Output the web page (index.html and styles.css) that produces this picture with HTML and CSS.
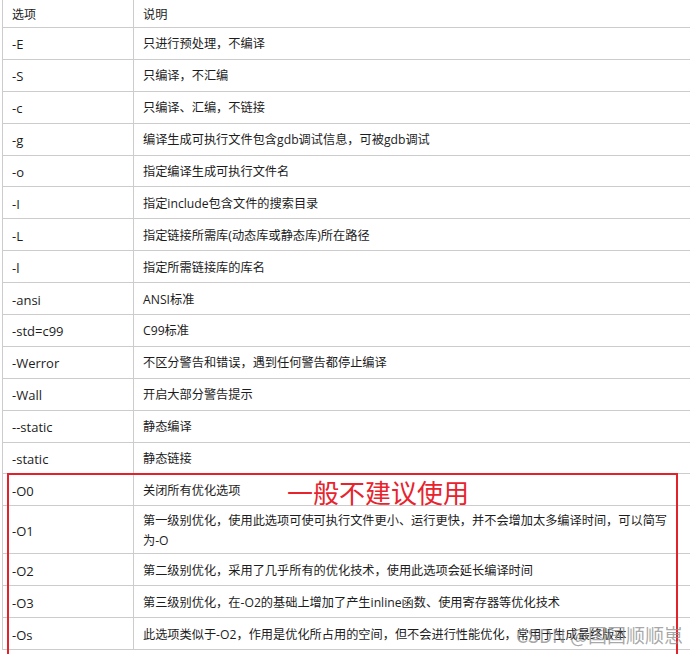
FILE: index.html
```html
<!DOCTYPE html>
<html lang="zh-CN">
<head>
<meta charset="utf-8">
<title>gcc 选项</title>
<link rel="stylesheet" href="styles.css">
</head>
<body>
<div class="page">
  <table class="opts">
    <colgroup><col class="c1"><col class="c2"></colgroup>
    <tr class="head"><td class="opt">选项</td><td class="desc">说明</td></tr>
    <tr><td class="opt">-E</td><td class="desc">只进行预处理，不编译</td></tr>
    <tr><td class="opt">-S</td><td class="desc">只编译，不汇编</td></tr>
    <tr><td class="opt">-c</td><td class="desc">只编译、汇编，不链接</td></tr>
    <tr><td class="opt">-g</td><td class="desc">编译生成可执行文件包含gdb调试信息，可被gdb调试</td></tr>
    <tr><td class="opt">-o</td><td class="desc">指定编译生成可执行文件名</td></tr>
    <tr><td class="opt">-I</td><td class="desc">指定include包含文件的搜索目录</td></tr>
    <tr><td class="opt">-L</td><td class="desc">指定链接所需库(动态库或静态库)所在路径</td></tr>
    <tr><td class="opt">-l</td><td class="desc">指定所需链接库的库名</td></tr>
    <tr><td class="opt">-ansi</td><td class="desc">ANSI标准</td></tr>
    <tr><td class="opt">-std=c99</td><td class="desc">C99标准</td></tr>
    <tr><td class="opt">-Werror</td><td class="desc">不区分警告和错误，遇到任何警告都停止编译</td></tr>
    <tr><td class="opt">-Wall</td><td class="desc">开启大部分警告提示</td></tr>
    <tr><td class="opt">--static</td><td class="desc">静态编译</td></tr>
    <tr><td class="opt">-static</td><td class="desc">静态链接</td></tr>
    <tr><td class="opt">-O0</td><td class="desc">关闭所有优化选项</td></tr>
    <tr class="tall"><td class="opt">-O1</td><td class="desc">第一级别优化，使用此选项可使可执行文件更小、运行更快，并不会增加太多编译时间，可以简写<br>为-O</td></tr>
    <tr><td class="opt">-O2</td><td class="desc">第二级别优化，采用了几乎所有的优化技术，使用此选项会延长编译时间</td></tr>
    <tr><td class="opt">-O3</td><td class="desc">第三级别优化，在-O2的基础上增加了产生inline函数、使用寄存器等优化技术</td></tr>
    <tr><td class="opt">-Os</td><td class="desc">此选项类似于-O2，作用是优化所占用的空间，但不会进行性能优化，常用于生成最终版本</td></tr>
  </table>
  <div class="mark">
    <span class="mark-note">一般不建议使用</span>
  </div>
  <div class="watermark">CSDN @国国顺顺崽</div>
</div>
</body>
</html>
```

FILE: styles.css
```css
html, body {
  margin: 0;
  padding: 0;
  background: #ffffff;
}

.page {
  position: relative;
  width: 690px;
  height: 654px;
  overflow: hidden;
  padding-left: 2px;
  box-sizing: border-box;
}

.opts {
  border-collapse: collapse;
  table-layout: fixed;
  width: 688px;
  color: #1c1c1c;
  font-family: "Open Sans", "Noto Sans CJK SC", sans-serif;
}

.c1 { width: 131px; }
.c2 { width: 557px; }

.opts td {
  border: 1px solid #cccccc;
  padding: 2px 14px 0 9px;
  vertical-align: middle;
  line-height: 20px;
}

.opts tr { height: 31.9px; }
.opts tr.head { height: 27.5px; }
.opts tr.head td { border-top: none; }
.opts tr.tall { height: 48px; }

.opt { font-size: 13px; }
.head .opt { font-size: 12px; }
.desc { font-size: 12.2px; }

.mark {
  position: absolute;
  left: 7px;
  top: 473px;
  width: 667px;
  height: 220px;
  border: 2px solid #e3212b;
}

.mark-note {
  position: absolute;
  left: 278px;
  top: 1px;
  font-family: "Noto Sans CJK SC", sans-serif;
  font-size: 26px;
  line-height: 32px;
  color: #e8232d;
}

.watermark {
  position: absolute;
  left: 516px;
  top: 622px;
  font-family: "Noto Sans CJK SC", sans-serif;
  font-size: 19px;
  line-height: 26px;
  color: rgba(140, 140, 140, 0.75);
  white-space: nowrap;
}
```
